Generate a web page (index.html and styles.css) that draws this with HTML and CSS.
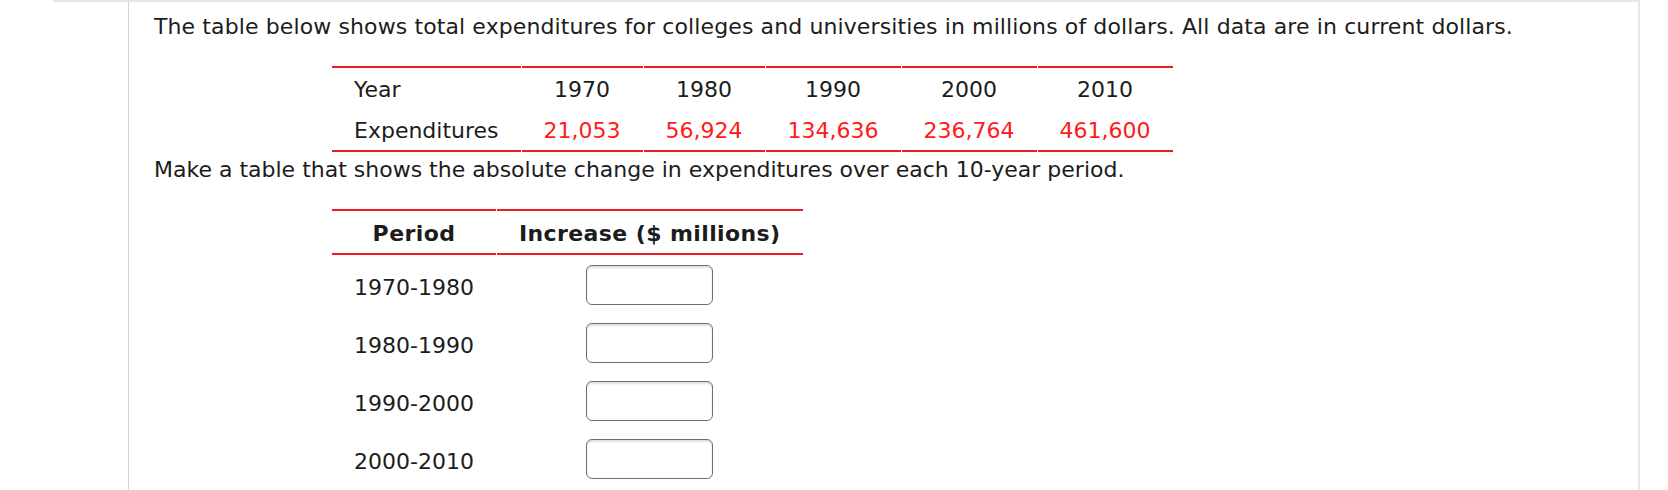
FILE: index.html
```html
<!DOCTYPE html>
<html>
<head>
<meta charset="utf-8">
<link rel="stylesheet" href="styles.css">
</head>
<body>
<div class="frame">
  <div class="content">
    <p class="para first">The table below shows total expenditures for colleges and universities in millions of dollars. All data are in current dollars.</p>
    <table class="data">
      <tr>
        <td class="label">Year</td>
        <td>1970</td>
        <td>1980</td>
        <td>1990</td>
        <td>2000</td>
        <td>2010</td>
      </tr>
      <tr>
        <td class="label">Expenditures</td>
        <td class="val">21,053</td>
        <td class="val">56,924</td>
        <td class="val">134,636</td>
        <td class="val">236,764</td>
        <td class="val">461,600</td>
      </tr>
    </table>
    <p class="para second">Make a table that shows the absolute change in expenditures over each 10-year period.</p>
    <table class="answer">
      <tr class="head">
        <th>Period</th>
        <th>Increase ($ millions)</th>
      </tr>
      <tr>
        <td class="period">1970-1980</td>
        <td class="box-cell"><input class="box" type="text"></td>
      </tr>
      <tr>
        <td class="period">1980-1990</td>
        <td class="box-cell"><input class="box" type="text"></td>
      </tr>
      <tr>
        <td class="period">1990-2000</td>
        <td class="box-cell"><input class="box" type="text"></td>
      </tr>
      <tr>
        <td class="period">2000-2010</td>
        <td class="box-cell"><input class="box" type="text"></td>
      </tr>
    </table>
  </div>
</div>
</body>
</html>
```

FILE: styles.css
```css
html, body {
  margin: 0;
  padding: 0;
  background: #fff;
  overflow: hidden;
}
body {
  font-family: "DejaVu Sans", Verdana, sans-serif;
  font-size: 22px;
  line-height: 26px;
  color: #1c1c1c;
}
.frame {
  margin-left: 53px;
  width: 1587px;
  height: 490px;
  box-sizing: border-box;
  border-top: 2px solid #e6e6e6;
  border-right: 2px solid #e6e6e6;
}
.content {
  margin-left: 75px;
  height: 100%;
  border-left: 1px solid #d2d2d2;
  padding-left: 25px;
}
.para {
  margin: 0;
}
.first {
  padding-top: 12px;
  letter-spacing: 0.11px;
}
.data {
  margin: 26px 0 0 177px;
  border-collapse: separate;
  border-spacing: 1px 0;
}
.data td {
  border-top: 2px solid #ec1c24;
  border-bottom: 2px solid #ec1c24;
  padding: 9px 22px 6px;
  text-align: center;
  white-space: nowrap;
}
.data tr:first-child td {
  border-bottom: none;
}
.data tr:last-child td {
  border-top: none;
}
.data td.label {
  text-align: left;
}
.data td.val {
  color: #ff1a1a;
}
.second {
  margin-top: 5px;
}
.answer {
  margin: 26px 0 0 177px;
  border-collapse: separate;
  border-spacing: 1px 0;
}
.answer th {
  font-weight: bold;
  letter-spacing: 0.4px;
  border-top: 2px solid #ec1c24;
  border-bottom: 2px solid #ec1c24;
  padding: 10px 22px 6px;
  text-align: center;
  white-space: nowrap;
}
.answer td {
  padding: 10px 22px 8px;
  white-space: nowrap;
}
.answer td.period {
  text-align: left;
  vertical-align: baseline;
}
.answer td.box-cell {
  text-align: center;
  vertical-align: baseline;
}
.box {
  width: 127px;
  height: 40px;
  box-sizing: border-box;
  margin: 0;
  padding: 4px 6px 0;
  border: 1px solid #6e6e6e;
  border-radius: 6px;
  box-shadow: inset 0 2px 2px rgba(0, 0, 0, 0.12);
  font-family: "DejaVu Sans", Verdana, sans-serif;
  font-size: 22px;
  background: #fff;
  vertical-align: baseline;
}
```
